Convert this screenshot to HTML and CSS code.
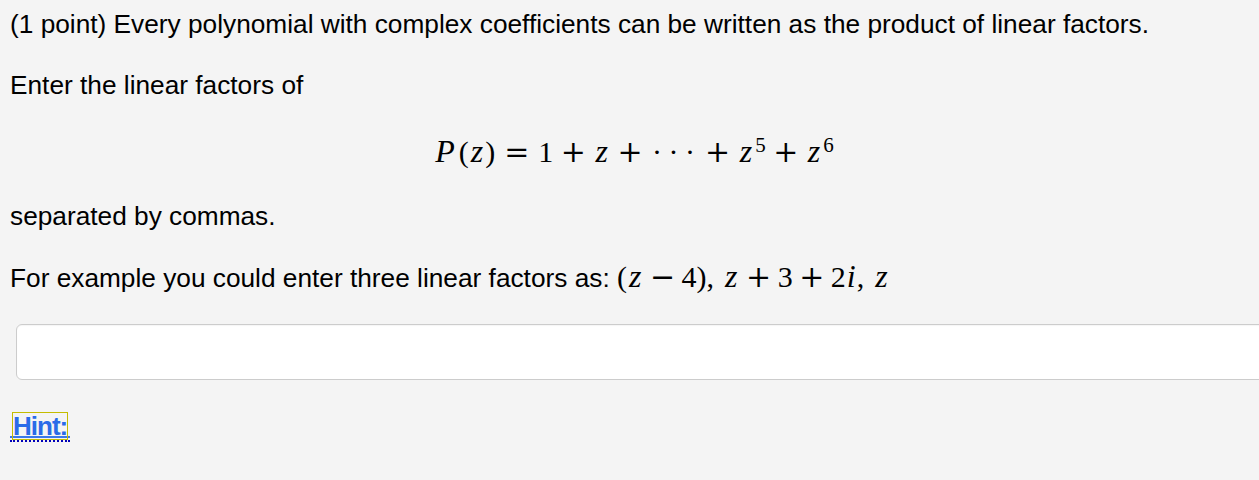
FILE: index.html
```html
<!DOCTYPE html>
<html>
<head>
<meta charset="utf-8">
<link rel="stylesheet" href="styles.css">
</head>
<body>
<div class="problem">
  <p class="line first">(1 point) Every polynomial with complex coefficients can be written as the product of linear factors.</p>
  <p class="line">Enter the linear factors of</p>
  <div class="display"><span class="math"><i class="pv">P</i>(<i class="zv">z</i>)<span class="rel">=</span>1<span class="bin">+</span><i class="zv">z</i><span class="bin">+</span><span class="dots">&middot;&middot;&middot;</span><span class="bin">+</span><i class="zv">z</i><sup>5</sup><span class="bin">+</span><i class="zv">z</i><sup>6</sup></span></div>
  <p class="line after-display">separated by commas.</p>
  <p class="line example">For example you could enter three linear factors as: <span class="math inline">(<i class="zv">z</i><span class="bin">&minus;</span>4),<span class="thin"></span><i class="zv">z</i><span class="bin">+</span>3<span class="bin">+</span>2<i class="iv">i</i>,<span class="thin"></span><i class="zv">z</i></span></p>
  <div class="answer"><input class="answer-input" type="text"></div>
  <div class="hint"><a class="hint-link" href="#"><span class="hint-text">Hint:</span></a></div>
</div>
</body>
</html>
```
FILE: styles.css
```css
html, body {
  margin: 0;
  padding: 0;
  background: #f4f4f4;
}
body {
  width: 1259px;
  height: 480px;
  overflow: hidden;
}
.problem {
  padding-left: 10px;
  font-family: "Liberation Sans", Arial, sans-serif;
  font-size: 26.25px;
  color: #000;
}
.line {
  margin: 31px 0 0;
  height: 30px;
  line-height: 30px;
  white-space: nowrap;
}
.line.first { margin-top: 9px; }
.line.after-display { margin-top: 29px; }
.line.example { margin-top: 32px; }
.display {
  margin-top: 32px;
  height: 40px;
  line-height: 40px;
  text-align: center;
  font-family: "Liberation Serif", "Times New Roman", serif;
  font-size: 30px;
}
.math {
  font-family: "Liberation Serif", "Times New Roman", serif;
  font-size: 30px;
  line-height: 0;
  white-space: nowrap;
}
.math i {
  font-style: italic;
  font-size: 32px;
}
.math .pv { padding-right: 4px; }
.math .zv { padding: 0 2px; }
.math .iv { padding: 0 1px; }
.math sup {
  font-size: 21px;
  line-height: 0;
  vertical-align: 10px;
  padding-left: 1px;
}
.math .rel, .math .bin {
  font-family: "DejaVu Serif", serif;
  font-size: 30px;
  margin: 0 7.5px;
}
.math .rel { margin: 0 9px; }
.math .dots {
  letter-spacing: 6.5px;
  margin-left: 2px;
  margin-right: -4px;
}
.math .thin {
  display: inline-block;
  width: 9px;
}
.math.inline .bin { margin: 0 6.5px; }
.answer {
  margin-top: 31px;
  padding-left: 6px;
}
.answer-input {
  display: block;
  box-sizing: border-box;
  width: 1260px;
  height: 56px;
  margin: 0;
  background: #fff;
  border: 1px solid #cccccc;
  border-radius: 6px;
  box-shadow: inset 0 1px 1px rgba(0, 0, 0, 0.04);
}
.hint {
  display: flex;
  margin-top: 33px;
}
.hint-link {
  display: block;
  padding: 0 3px 1px;
  border-bottom: 2px dotted #0000b8;
  background: linear-gradient(#3a78ea, #3a78ea) no-repeat 0 23px / 100% 2px;
  text-decoration: none;
}
.hint-text {
  display: block;
  height: 26px;
  line-height: 26px;
  font-weight: bold;
  font-size: 26px;
  letter-spacing: -1px;
  color: #2a6be8;
  outline: 1px solid #c4bc00;
}
```
